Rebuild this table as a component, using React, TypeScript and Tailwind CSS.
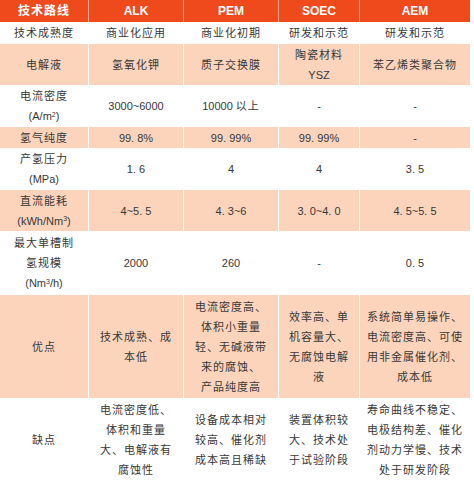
import React from "react";

type Row = { h: string; pink?: boolean; header?: boolean; cells: React.ReactNode[] };

const rows: Row[] = [
  { h: "h-[22px]", header: true, cells: ["技术路线", "ALK", "PEM", "SOEC", "AEM"] },
  { h: "h-[22px]", cells: ["技术成熟度", "商业化应用", "商业化初期", "研发和示范", "研发和示范"] },
  { h: "h-[41px]", pink: true, cells: ["电解液", "氢氧化钾", "质子交换膜", <>陶瓷材料<br /><span className="tracking-normal">YSZ</span></>, "苯乙烯类聚合物"] },
  {
    h: "h-[42px]",
    cells: [
      <>电流密度<br /><span className="tracking-normal">(A/m<sup className="text-[7px]">2</sup>)</span></>,
      "3000~6000",
      <><span className="tracking-normal">10000 </span>以上</>,
      "-",
      "-",
    ],
  },
  { h: "h-[21px]", pink: true, cells: ["氢气纯度", "99. 8%", "99. 99%", "99. 99%", "-"] },
  { h: "h-[42px]", cells: [<>产氢压力<br /><span className="tracking-normal">(MPa)</span></>, "1. 6", "4", "4", "3. 5"] },
  {
    h: "h-[41px]",
    pink: true,
    cells: [
      <>直流能耗<br /><span className="tracking-normal">(kWh/Nm<sup className="text-[7px]">3</sup>)</span></>,
      "4~5. 5",
      "4. 3~6",
      "3. 0~4. 0",
      "4. 5~5. 5",
    ],
  },
  {
    h: "h-[64px]",
    cells: [
      <>最大单槽制<br />氢规模<br /><span className="tracking-normal">(Nm<sup className="text-[7px]">3</sup>/h)</span></>,
      "2000",
      "260",
      "-",
      "0. 5",
    ],
  },
  {
    h: "h-[103px]",
    pink: true,
    cells: [
      "优点",
      <>技术成熟、成<br />本低</>,
      <>电流密度高、<br />体积小重量<br />轻、无碱液带<br />来的腐蚀、<br />产品纯度高</>,
      <>效率高、单<br />机容量大、<br />无腐蚀电解<br />液</>,
      <>系统简单易操作、<br />电流密度高、可使<br />用非金属催化剂、<br />成本低</>,
    ],
  },
  {
    h: "h-[83px]",
    cells: [
      "缺点",
      <>电流密度低、<br />体积和重量<br />大、电解液有<br />腐蚀性</>,
      <>设备成本相对<br />较高、催化剂<br />成本高且稀缺</>,
      <>装置体积较<br />大、技术处<br />于试验阶段</>,
      <>寿命曲线不稳定、<br />电极结构差、催化<br />剂动力学慢、技术<br />处于研发阶段</>,
    ],
  },
];

const isLatin = (c: React.ReactNode) => typeof c === "string" && /^[A-Za-z0-9.\s~%-]+$/.test(c);

export default function App() {
  return (
    <div className="w-[474px] h-[481px] bg-white overflow-hidden">
      <div className="w-[470px] grid grid-cols-[88px_95px_95px_81px_111px]">
        {rows.map((r, ri) =>
          r.cells.map((c, ci) => (
            <div
              key={`${ri}-${ci}`}
              className={[
                r.h,
                "flex items-center justify-center text-center leading-[20px]",
                ci > 0 ? (r.header ? "border-l border-[#f7a98d]" : "border-l border-white") : "",
                r.header
                  ? "bg-[#ee4a1c] text-white font-bold text-[12px]"
                  : r.pink
                  ? "bg-[#fcd4bb] text-[#383838] text-[11px]"
                  : "bg-white text-[#383838] text-[11px]",
                isLatin(c) ? "tracking-normal" : "tracking-[1px]",
              ].join(" ")}
              style={{ fontFamily: '"Liberation Sans", "Noto Sans CJK SC", sans-serif' }}
            >
              <div>{c}</div>
            </div>
          ))
        )}
      </div>
    </div>
  );
}
